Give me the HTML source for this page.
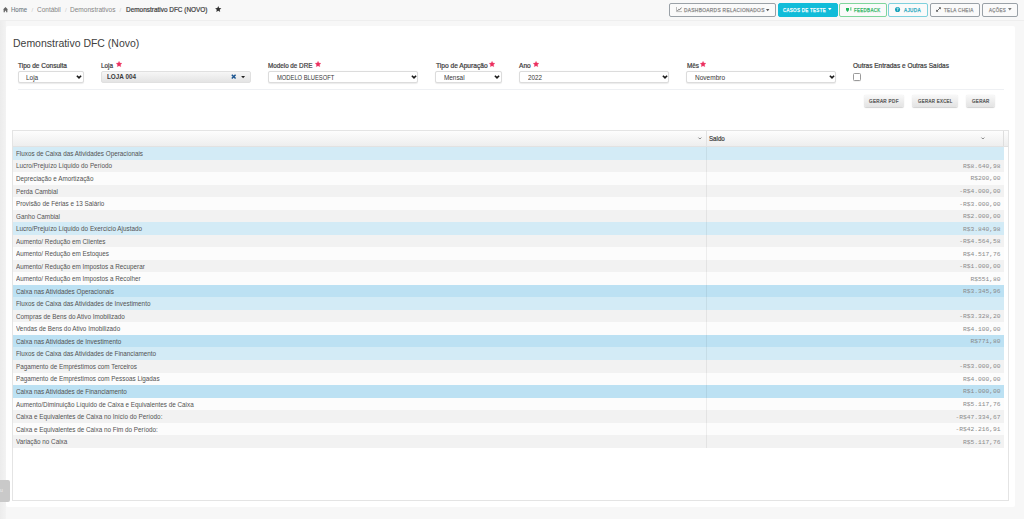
<!DOCTYPE html>
<html><head><meta charset="utf-8">
<style>
*{box-sizing:border-box;margin:0;padding:0}
html,body{width:1024px;height:519px;overflow:hidden;background:#f5f5f5;font-family:"Liberation Sans",sans-serif;color:#333}
.r,.t{position:absolute}
.t{white-space:nowrap}
svg.r{overflow:visible}
</style></head><body>
<div class="r" style="left:0px;top:0px;width:1024px;height:519px;background:#f7f7f7"></div>
<div class="r" style="left:0px;top:21px;width:6px;height:498px;background:linear-gradient(90deg,#ececec,#f3f3f3)"></div>
<div class="r" style="left:0px;top:0px;width:1024px;height:20px;background:#f8f8f8"></div>
<div class="r" style="left:0px;top:20px;width:1024px;height:1px;background:#eeeeee"></div>
<svg class="r" style="left:2.9px;top:6.9px" width="5" height="5.2" viewBox="0 0 12 10" preserveAspectRatio="none"><path d="M6 0 L0 5 L1.5 5 L1.5 10 L4.5 10 L4.5 7 L7.5 7 L7.5 10 L10.5 10 L10.5 5 L12 5 Z" fill="#666"/></svg>
<div class="t" style="left:11px;top:5.85px;font-size:6.8px;line-height:7.596px;font-weight:normal;letter-spacing:0px;color:#6e7882;-webkit-text-stroke:0.1px #6e7882;transform:scaleX(0.8820);transform-origin:0 0;">Home</div>
<div class="t" style="left:31.5px;top:6.57px;font-size:6.0px;line-height:6.702px;font-weight:normal;letter-spacing:0px;color:#c8c8c8;;">/</div>
<div class="t" style="left:37px;top:5.85px;font-size:6.8px;line-height:7.596px;font-weight:normal;letter-spacing:0px;color:#858585;;transform:scaleX(0.9524);transform-origin:0 0;">Contábil</div>
<div class="t" style="left:65px;top:6.57px;font-size:6.0px;line-height:6.702px;font-weight:normal;letter-spacing:0px;color:#c8c8c8;;">/</div>
<div class="t" style="left:70.25px;top:5.85px;font-size:6.8px;line-height:7.596px;font-weight:normal;letter-spacing:0px;color:#858585;;transform:scaleX(0.9636);transform-origin:0 0;">Demonstrativos</div>
<div class="t" style="left:119.5px;top:6.57px;font-size:6.0px;line-height:6.702px;font-weight:normal;letter-spacing:0px;color:#c8c8c8;;">/</div>
<div class="t" style="left:125.8px;top:5.55px;font-size:6.8px;line-height:7.596px;font-weight:normal;letter-spacing:0px;color:#3d3d3d;-webkit-text-stroke:0.2px #3d3d3d;transform:scaleX(0.9465);transform-origin:0 0;">Demonstrativo DFC (NOVO)</div>
<svg class="r" style="left:214.5px;top:5.9px" width="6.5" height="6" viewBox="0 0 24 23"><path d="M12 0 L15.5 7.5 L24 8.5 L17.7 14.2 L19.4 22.6 L12 18.4 L4.6 22.6 L6.3 14.2 L0 8.5 L8.5 7.5 Z" fill="#333"/></svg>
<div class="r" style="left:669.3px;top:3px;width:106.30000000000007px;height:13.5px;border:1px solid #9aa1a7;border-radius:2px;background:#fafafa"></div>
<div class="t" style="left:684.1px;top:7.89px;font-size:5.2px;line-height:5.808px;font-weight:normal;letter-spacing:0.35px;color:#8a8a8a;-webkit-text-stroke:0.25px #8a8a8a;transform:scaleX(0.9271);transform-origin:0 0;">DASHBOARDS RELACIONADOS</div>
<svg class="r" style="left:766.2px;top:8.5px" width="3.4" height="2.2" viewBox="0 0 4 2.6"><path d="M0 0H4L2 2.6Z" fill="#555"/></svg>
<svg class="r" style="left:675.6px;top:7px" width="6.2" height="5" viewBox="0 0 12 10"><path d="M0.8 0V9.2H12" stroke="#999" stroke-width="1.3" fill="none"/><path d="M2.6 8L5.4 4.6L7.2 5.6L10.8 1.2" stroke="#6f6f6f" stroke-width="1.9" fill="none"/></svg>
<div class="r" style="left:777.6px;top:3px;width:60.10000000000002px;height:13.5px;border:1px solid #10bcd9;border-radius:2px;background:#10bcd9"></div>
<div class="t" style="left:783px;top:7.89px;font-size:5.2px;line-height:5.808px;font-weight:normal;letter-spacing:0.35px;color:#ffffff;-webkit-text-stroke:0.25px #ffffff;transform:scaleX(0.8638);transform-origin:0 0;">CASOS DE TESTE</div>
<svg class="r" style="left:828.4px;top:8.3px" width="3.6" height="2.4" viewBox="0 0 4 2.6"><path d="M0 0H4L2 2.6Z" fill="#fff"/></svg>
<div class="r" style="left:839.4px;top:3px;width:47.200000000000045px;height:13.5px;border:1px solid #7fd59d;border-radius:2px;background:#fafafa"></div>
<div class="t" style="left:853.6px;top:7.89px;font-size:5.2px;line-height:5.808px;font-weight:normal;letter-spacing:0.35px;color:#2fb563;-webkit-text-stroke:0.25px #2fb563;transform:scaleX(0.8614);transform-origin:0 0;">FEEDBACK</div>
<svg class="r" style="left:845.9px;top:7px" width="6" height="5" viewBox="0 0 6 5"><path d="M0 0.9H3V2.6Q3 4 1.5 5Q0 4 0 2.6Z" fill="#1fb85a"/><path d="M4.2 0.5L5.4 0.1V3.8L4.2 3.4Z" fill="#5fcf8a"/></svg>
<div class="r" style="left:888.2px;top:3px;width:39.89999999999998px;height:13.5px;border:1px solid #7fd0dc;border-radius:2px;background:#fafafa"></div>
<div class="t" style="left:903.8px;top:7.89px;font-size:5.2px;line-height:5.808px;font-weight:normal;letter-spacing:0.35px;color:#1fa8c0;-webkit-text-stroke:0.25px #1fa8c0;transform:scaleX(0.9006);transform-origin:0 0;">AJUDA</div>
<svg class="r" style="left:895.3px;top:7px" width="5.1" height="5.1" viewBox="0 0 10 10"><circle cx="5" cy="5" r="5" fill="#16a2ba"/><path d="M3.6 3.8Q3.6 2.3 5 2.3Q6.5 2.3 6.5 3.6Q6.5 4.5 5 5.2V6" stroke="#fff" stroke-width="1.3" fill="none"/><rect x="4.4" y="6.8" width="1.3" height="1.2" fill="#fff"/></svg>
<div class="r" style="left:929.7px;top:3px;width:50.69999999999993px;height:13.5px;border:1px solid #9aa1a7;border-radius:2px;background:#fafafa"></div>
<div class="t" style="left:944.3px;top:7.89px;font-size:5.2px;line-height:5.808px;font-weight:normal;letter-spacing:0.35px;color:#8a8a8a;-webkit-text-stroke:0.25px #8a8a8a;transform:scaleX(0.8870);transform-origin:0 0;">TELA CHEIA</div>
<svg class="r" style="left:935.7px;top:7px" width="5" height="5" viewBox="0 0 10 10"><path d="M2 8L8 2" stroke="#555" stroke-width="1.7"/><path d="M5.2 0.3H9.7V4.8Z M0.3 5.2V9.7H4.8Z" fill="#555"/></svg>
<div class="r" style="left:982.3px;top:3px;width:35.700000000000045px;height:13.5px;border:1px solid #9aa1a7;border-radius:2px;background:#fafafa"></div>
<div class="t" style="left:988.5px;top:7.89px;font-size:5.2px;line-height:5.808px;font-weight:normal;letter-spacing:0.35px;color:#8a8a8a;-webkit-text-stroke:0.25px #8a8a8a;transform:scaleX(0.8533);transform-origin:0 0;">AÇÕES</div>
<svg class="r" style="left:1008.2px;top:8.3px" width="3.7" height="2.4" viewBox="0 0 4 2.6"><path d="M0 0H4L2 2.6Z" fill="#777"/></svg>
<div class="r" style="left:6px;top:26px;width:1009px;height:481px;background:#ffffff;border-radius:2px"></div>
<div class="t" style="left:12.5px;top:37.45px;font-size:11px;line-height:12.287px;font-weight:normal;letter-spacing:0px;color:#404040;;transform:scaleX(0.9518);transform-origin:0 0;">Demonstrativo DFC (Novo)</div>
<div class="t" style="left:18px;top:61.77px;font-size:6.5px;line-height:7.261px;font-weight:normal;letter-spacing:0px;color:#3a3a3a;-webkit-text-stroke:0.2px #3a3a3a;transform:scaleX(0.9999);transform-origin:0 0;">Tipo de Consulta</div>
<div class="t" style="left:101.3px;top:61.77px;font-size:6.5px;line-height:7.261px;font-weight:normal;letter-spacing:0px;color:#3a3a3a;-webkit-text-stroke:0.2px #3a3a3a;transform:scaleX(0.9759);transform-origin:0 0;">Loja</div>
<svg class="r" style="left:115.5px;top:60.9px" width="6.1" height="6.1" viewBox="0 0 10 10"><path d="M5.00 0.40L6.47 3.38L9.76 3.85L7.38 6.17L7.94 9.45L5.00 7.90L2.06 9.45L2.62 6.17L0.24 3.85L3.53 3.38Z" fill="#ec2f5f" stroke="#ec2f5f" stroke-width="0.4" stroke-linejoin="round"/></svg>
<div class="t" style="left:268.4px;top:61.77px;font-size:6.5px;line-height:7.261px;font-weight:normal;letter-spacing:0px;color:#3a3a3a;-webkit-text-stroke:0.2px #3a3a3a;transform:scaleX(0.9675);transform-origin:0 0;">Modelo de DRE</div>
<svg class="r" style="left:315.2px;top:60.9px" width="6.1" height="6.1" viewBox="0 0 10 10"><path d="M5.00 0.40L6.47 3.38L9.76 3.85L7.38 6.17L7.94 9.45L5.00 7.90L2.06 9.45L2.62 6.17L0.24 3.85L3.53 3.38Z" fill="#ec2f5f" stroke="#ec2f5f" stroke-width="0.4" stroke-linejoin="round"/></svg>
<div class="t" style="left:435.6px;top:61.77px;font-size:6.5px;line-height:7.261px;font-weight:normal;letter-spacing:0px;color:#3a3a3a;-webkit-text-stroke:0.2px #3a3a3a;transform:scaleX(1.0174);transform-origin:0 0;">Tipo de Apuração</div>
<svg class="r" style="left:489.2px;top:60.9px" width="6.1" height="6.1" viewBox="0 0 10 10"><path d="M5.00 0.40L6.47 3.38L9.76 3.85L7.38 6.17L7.94 9.45L5.00 7.90L2.06 9.45L2.62 6.17L0.24 3.85L3.53 3.38Z" fill="#ec2f5f" stroke="#ec2f5f" stroke-width="0.4" stroke-linejoin="round"/></svg>
<div class="t" style="left:519.3px;top:61.77px;font-size:6.5px;line-height:7.261px;font-weight:normal;letter-spacing:0px;color:#3a3a3a;-webkit-text-stroke:0.2px #3a3a3a;transform:scaleX(1.0105);transform-origin:0 0;">Ano</div>
<svg class="r" style="left:532.6999999999999px;top:60.9px" width="6.1" height="6.1" viewBox="0 0 10 10"><path d="M5.00 0.40L6.47 3.38L9.76 3.85L7.38 6.17L7.94 9.45L5.00 7.90L2.06 9.45L2.62 6.17L0.24 3.85L3.53 3.38Z" fill="#ec2f5f" stroke="#ec2f5f" stroke-width="0.4" stroke-linejoin="round"/></svg>
<div class="t" style="left:686.5px;top:61.77px;font-size:6.5px;line-height:7.261px;font-weight:normal;letter-spacing:0px;color:#3a3a3a;-webkit-text-stroke:0.2px #3a3a3a;transform:scaleX(0.9771);transform-origin:0 0;">Mês</div>
<svg class="r" style="left:699.6999999999999px;top:60.9px" width="6.1" height="6.1" viewBox="0 0 10 10"><path d="M5.00 0.40L6.47 3.38L9.76 3.85L7.38 6.17L7.94 9.45L5.00 7.90L2.06 9.45L2.62 6.17L0.24 3.85L3.53 3.38Z" fill="#ec2f5f" stroke="#ec2f5f" stroke-width="0.4" stroke-linejoin="round"/></svg>
<div class="t" style="left:853.4px;top:61.77px;font-size:6.5px;line-height:7.261px;font-weight:normal;letter-spacing:0px;color:#3a3a3a;-webkit-text-stroke:0.2px #3a3a3a;transform:scaleX(0.9978);transform-origin:0 0;">Outras Entradas e Outras Saídas</div>
<div class="r" style="left:17.5px;top:70.6px;width:66.3px;height:12.2px;border:1px solid #dcdcdc;border-radius:2px;background:#fff;box-shadow:0 0.5px 1px rgba(0,0,0,.08)"></div>
<div class="t" style="left:25.8px;top:73.73px;font-size:6.6px;line-height:7.372px;font-weight:normal;letter-spacing:0px;color:#383838;;transform:scaleX(0.9784);transform-origin:0 0;">Loja</div>
<svg class="r" style="left:76.2px;top:75.1px" width="6" height="4" viewBox="0 0 10 7"><path d="M1.3 1.3L5 5L8.7 1.3" stroke="#1a1a1a" stroke-width="2.8" fill="none"/></svg>
<div class="r" style="left:268.4px;top:70.6px;width:150.0px;height:12.2px;border:1px solid #dcdcdc;border-radius:2px;background:#fff;box-shadow:0 0.5px 1px rgba(0,0,0,.08)"></div>
<div class="t" style="left:276.8px;top:73.73px;font-size:6.6px;line-height:7.372px;font-weight:normal;letter-spacing:0px;color:#383838;;transform:scaleX(0.8786);transform-origin:0 0;">MODELO BLUESOFT</div>
<svg class="r" style="left:410.79999999999995px;top:75.1px" width="6" height="4" viewBox="0 0 10 7"><path d="M1.3 1.3L5 5L8.7 1.3" stroke="#1a1a1a" stroke-width="2.8" fill="none"/></svg>
<div class="r" style="left:435.3px;top:70.6px;width:66.30000000000001px;height:12.2px;border:1px solid #dcdcdc;border-radius:2px;background:#fff;box-shadow:0 0.5px 1px rgba(0,0,0,.08)"></div>
<div class="t" style="left:444px;top:73.73px;font-size:6.6px;line-height:7.372px;font-weight:normal;letter-spacing:0px;color:#383838;;transform:scaleX(0.9687);transform-origin:0 0;">Mensal</div>
<svg class="r" style="left:494.0px;top:75.1px" width="6" height="4" viewBox="0 0 10 7"><path d="M1.3 1.3L5 5L8.7 1.3" stroke="#1a1a1a" stroke-width="2.8" fill="none"/></svg>
<div class="r" style="left:519.3px;top:70.6px;width:150.0px;height:12.2px;border:1px solid #dcdcdc;border-radius:2px;background:#fff;box-shadow:0 0.5px 1px rgba(0,0,0,.08)"></div>
<div class="t" style="left:527.9px;top:73.73px;font-size:6.6px;line-height:7.372px;font-weight:normal;letter-spacing:0px;color:#383838;;transform:scaleX(0.9542);transform-origin:0 0;">2022</div>
<svg class="r" style="left:661.6999999999999px;top:75.1px" width="6" height="4" viewBox="0 0 10 7"><path d="M1.3 1.3L5 5L8.7 1.3" stroke="#1a1a1a" stroke-width="2.8" fill="none"/></svg>
<div class="r" style="left:686.3px;top:70.6px;width:150.0px;height:12.2px;border:1px solid #dcdcdc;border-radius:2px;background:#fff;box-shadow:0 0.5px 1px rgba(0,0,0,.08)"></div>
<div class="t" style="left:695px;top:73.73px;font-size:6.6px;line-height:7.372px;font-weight:normal;letter-spacing:0px;color:#383838;;transform:scaleX(0.9894);transform-origin:0 0;">Novembro</div>
<svg class="r" style="left:828.6999999999999px;top:75.1px" width="6" height="4" viewBox="0 0 10 7"><path d="M1.3 1.3L5 5L8.7 1.3" stroke="#1a1a1a" stroke-width="2.8" fill="none"/></svg>
<div class="r" style="left:101.3px;top:70.7px;width:149.9px;height:12.2px;border:1px solid #e0e0e0;border-radius:2px;background:linear-gradient(#f6f6f6,#e4e4e4)"></div>
<div class="t" style="left:107px;top:73.13px;font-size:6.6px;line-height:7.372px;font-weight:bold;letter-spacing:0px;color:#3a3a3a;;transform:scaleX(0.9607);transform-origin:0 0;">LOJA 004</div>
<svg class="r" style="left:230.8px;top:74px" width="5.4" height="5.4" viewBox="0 0 10 10"><path d="M1.5 1.5L8.5 8.5M8.5 1.5L1.5 8.5" stroke="#1b5590" stroke-width="2.8"/></svg>
<svg class="r" style="left:241px;top:76px" width="4.2" height="2.2" viewBox="0 0 4 2.2"><path d="M0 0H4L2 2.2Z" fill="#222"/></svg>
<div class="r" style="left:853px;top:72.8px;width:8px;height:7.8px;border:1px solid #9a9a9a;border-radius:1.5px;background:#fff;box-shadow:0 0.5px 0.5px rgba(0,0,0,.1)"></div>
<div class="r" style="left:18px;top:89px;width:986px;height:1px;background:#eef0f3"></div>
<div class="r" style="left:863.6px;top:95px;width:40.60000000000002px;height:12.3px;border-radius:2px;background:linear-gradient(#f8f8f8,#e3e3e3);box-shadow:0 0.6px 1px rgba(0,0,0,.18)"></div>
<div class="t" style="left:869px;top:99.24px;font-size:4.6px;line-height:5.138px;font-weight:normal;letter-spacing:0.35px;color:#4f4f4f;-webkit-text-stroke:0.2px #4f4f4f;transform:scaleX(0.9949);transform-origin:0 0;">GERAR PDF</div>
<div class="r" style="left:912px;top:95px;width:46.299999999999955px;height:12.3px;border-radius:2px;background:linear-gradient(#f8f8f8,#e3e3e3);box-shadow:0 0.6px 1px rgba(0,0,0,.18)"></div>
<div class="t" style="left:917.6px;top:99.24px;font-size:4.6px;line-height:5.138px;font-weight:normal;letter-spacing:0.35px;color:#4f4f4f;-webkit-text-stroke:0.2px #4f4f4f;transform:scaleX(0.9471);transform-origin:0 0;">GERAR EXCEL</div>
<div class="r" style="left:966px;top:95px;width:29px;height:12.3px;border-radius:2px;background:linear-gradient(#f8f8f8,#e3e3e3);box-shadow:0 0.6px 1px rgba(0,0,0,.18)"></div>
<div class="t" style="left:971.5px;top:99.24px;font-size:4.6px;line-height:5.138px;font-weight:normal;letter-spacing:0.35px;color:#4f4f4f;-webkit-text-stroke:0.2px #4f4f4f;transform:scaleX(0.9727);transform-origin:0 0;">GERAR</div>
<div class="r" style="left:12px;top:130px;width:997px;height:371px;border:1px solid #e4e4e4;background:#fff"></div>
<div class="r" style="left:13px;top:131px;width:995px;height:15px;background:linear-gradient(#fdfdfd,#eeeeee)"></div>
<div class="r" style="left:13px;top:146px;width:995px;height:1px;background:#e2e2e2"></div>
<div class="r" style="left:1003px;top:131px;width:1px;height:15px;background:#dedede"></div>
<div class="r" style="left:706px;top:131px;width:1px;height:15px;background:#e2e2e2"></div>
<svg class="r" style="left:697.6px;top:136.6px" width="3.8" height="2.6" viewBox="0 0 8 5"><path d="M1 1L4 4L7 1" stroke="#777" stroke-width="1.9" fill="none"/></svg>
<svg class="r" style="left:980.6px;top:136.6px" width="3.8" height="2.6" viewBox="0 0 8 5"><path d="M1 1L4 4L7 1" stroke="#777" stroke-width="1.9" fill="none"/></svg>
<div class="t" style="left:709.3px;top:134.64px;font-size:6.7px;line-height:7.484px;font-weight:normal;letter-spacing:0px;color:#404040;-webkit-text-stroke:0.2px #404040;transform:scaleX(0.9235);transform-origin:0 0;">Saldo</div>
<div class="r" style="left:13px;top:147.0px;width:990.7px;height:12.53px;background:#d3ebf6"></div>
<div class="r" style="left:13px;top:159.53px;width:990.7px;height:12.53px;background:#f2f2f2"></div>
<div class="r" style="left:13px;top:172.06px;width:990.7px;height:12.53px;background:#fcfcfc"></div>
<div class="r" style="left:13px;top:184.59px;width:990.7px;height:12.53px;background:#f2f2f2"></div>
<div class="r" style="left:13px;top:197.12px;width:990.7px;height:12.53px;background:#fcfcfc"></div>
<div class="r" style="left:13px;top:209.65px;width:990.7px;height:12.53px;background:#f2f2f2"></div>
<div class="r" style="left:13px;top:222.18px;width:990.7px;height:12.53px;background:#d3ebf6"></div>
<div class="r" style="left:13px;top:234.71px;width:990.7px;height:12.53px;background:#f2f2f2"></div>
<div class="r" style="left:13px;top:247.24px;width:990.7px;height:12.53px;background:#fcfcfc"></div>
<div class="r" style="left:13px;top:259.77px;width:990.7px;height:12.53px;background:#f2f2f2"></div>
<div class="r" style="left:13px;top:272.3px;width:990.7px;height:12.53px;background:#fcfcfc"></div>
<div class="r" style="left:13px;top:284.83px;width:990.7px;height:12.53px;background:#bce1f3"></div>
<div class="r" style="left:13px;top:297.36px;width:990.7px;height:12.53px;background:#d3ebf6"></div>
<div class="r" style="left:13px;top:309.89px;width:990.7px;height:12.53px;background:#f2f2f2"></div>
<div class="r" style="left:13px;top:322.42px;width:990.7px;height:12.53px;background:#fcfcfc"></div>
<div class="r" style="left:13px;top:334.95px;width:990.7px;height:12.53px;background:#bce1f3"></div>
<div class="r" style="left:13px;top:347.48px;width:990.7px;height:12.53px;background:#d3ebf6"></div>
<div class="r" style="left:13px;top:360.01px;width:990.7px;height:12.53px;background:#f2f2f2"></div>
<div class="r" style="left:13px;top:372.54px;width:990.7px;height:12.53px;background:#fcfcfc"></div>
<div class="r" style="left:13px;top:385.07px;width:990.7px;height:12.53px;background:#bce1f3"></div>
<div class="r" style="left:13px;top:397.6px;width:990.7px;height:12.53px;background:#fcfcfc"></div>
<div class="r" style="left:13px;top:410.13px;width:990.7px;height:12.53px;background:#f2f2f2"></div>
<div class="r" style="left:13px;top:422.66px;width:990.7px;height:12.53px;background:#fcfcfc"></div>
<div class="r" style="left:13px;top:435.19px;width:990.7px;height:12.53px;background:#f2f2f2"></div>
<div class="t" style="left:15.7px;top:149.93px;font-size:6.6px;line-height:7.372px;font-weight:normal;letter-spacing:0px;color:#525252;transform:scaleX(0.96);transform-origin:0 0;">Fluxos de Caixa das Atividades Operacionais</div>
<div class="t" style="left:15.7px;top:162.46px;font-size:6.6px;line-height:7.372px;font-weight:normal;letter-spacing:0px;color:#525252;transform:scaleX(0.96);transform-origin:0 0;">Lucro/Prejuízo Líquido do Período</div>
<div class="t" style="right:23.399999999999977px;top:162.92px;font-size:6.25px;line-height:7.081px;font-family:'Liberation Mono',monospace;color:#8a8a8a">R$8.640,98</div>
<div class="t" style="left:15.7px;top:174.99px;font-size:6.6px;line-height:7.372px;font-weight:normal;letter-spacing:0px;color:#525252;transform:scaleX(0.96);transform-origin:0 0;">Depreciação e Amortização</div>
<div class="t" style="right:23.399999999999977px;top:175.45px;font-size:6.25px;line-height:7.081px;font-family:'Liberation Mono',monospace;color:#8a8a8a">R$200,00</div>
<div class="t" style="left:15.7px;top:187.52px;font-size:6.6px;line-height:7.372px;font-weight:normal;letter-spacing:0px;color:#525252;transform:scaleX(0.96);transform-origin:0 0;">Perda Cambial</div>
<div class="t" style="right:23.399999999999977px;top:187.98px;font-size:6.25px;line-height:7.081px;font-family:'Liberation Mono',monospace;color:#8a8a8a">-R$4.000,00</div>
<div class="t" style="left:15.7px;top:200.05px;font-size:6.6px;line-height:7.372px;font-weight:normal;letter-spacing:0px;color:#525252;transform:scaleX(0.96);transform-origin:0 0;">Provisão de Férias e 13 Salário</div>
<div class="t" style="right:23.399999999999977px;top:200.51px;font-size:6.25px;line-height:7.081px;font-family:'Liberation Mono',monospace;color:#8a8a8a">-R$3.000,00</div>
<div class="t" style="left:15.7px;top:212.58px;font-size:6.6px;line-height:7.372px;font-weight:normal;letter-spacing:0px;color:#525252;transform:scaleX(0.96);transform-origin:0 0;">Ganho Cambial</div>
<div class="t" style="right:23.399999999999977px;top:213.04px;font-size:6.25px;line-height:7.081px;font-family:'Liberation Mono',monospace;color:#8a8a8a">R$2.000,00</div>
<div class="t" style="left:15.7px;top:225.11px;font-size:6.6px;line-height:7.372px;font-weight:normal;letter-spacing:0px;color:#525252;transform:scaleX(0.96);transform-origin:0 0;">Lucro/Prejuízo Líquido do Exercício Ajustado</div>
<div class="t" style="right:23.399999999999977px;top:225.57px;font-size:6.25px;line-height:7.081px;font-family:'Liberation Mono',monospace;color:#8a8a8a">R$3.840,98</div>
<div class="t" style="left:15.7px;top:237.64px;font-size:6.6px;line-height:7.372px;font-weight:normal;letter-spacing:0px;color:#525252;transform:scaleX(0.96);transform-origin:0 0;">Aumento/ Redução em Clientes</div>
<div class="t" style="right:23.399999999999977px;top:238.10px;font-size:6.25px;line-height:7.081px;font-family:'Liberation Mono',monospace;color:#8a8a8a">-R$4.564,58</div>
<div class="t" style="left:15.7px;top:250.17px;font-size:6.6px;line-height:7.372px;font-weight:normal;letter-spacing:0px;color:#525252;transform:scaleX(0.96);transform-origin:0 0;">Aumento/ Redução em Estoques</div>
<div class="t" style="right:23.399999999999977px;top:250.63px;font-size:6.25px;line-height:7.081px;font-family:'Liberation Mono',monospace;color:#8a8a8a">R$4.517,76</div>
<div class="t" style="left:15.7px;top:262.70px;font-size:6.6px;line-height:7.372px;font-weight:normal;letter-spacing:0px;color:#525252;transform:scaleX(0.96);transform-origin:0 0;">Aumento/ Redução em Impostos a Recuperar</div>
<div class="t" style="right:23.399999999999977px;top:263.16px;font-size:6.25px;line-height:7.081px;font-family:'Liberation Mono',monospace;color:#8a8a8a">-R$1.000,00</div>
<div class="t" style="left:15.7px;top:275.23px;font-size:6.6px;line-height:7.372px;font-weight:normal;letter-spacing:0px;color:#525252;transform:scaleX(0.96);transform-origin:0 0;">Aumento/ Redução em Impostos a Recolher</div>
<div class="t" style="right:23.399999999999977px;top:275.69px;font-size:6.25px;line-height:7.081px;font-family:'Liberation Mono',monospace;color:#8a8a8a">R$551,80</div>
<div class="t" style="left:15.7px;top:287.76px;font-size:6.6px;line-height:7.372px;font-weight:normal;letter-spacing:0px;color:#525252;transform:scaleX(0.96);transform-origin:0 0;">Caixa nas Atividades Operacionais</div>
<div class="t" style="right:23.399999999999977px;top:288.22px;font-size:6.25px;line-height:7.081px;font-family:'Liberation Mono',monospace;color:#8a8a8a">R$3.345,96</div>
<div class="t" style="left:15.7px;top:300.29px;font-size:6.6px;line-height:7.372px;font-weight:normal;letter-spacing:0px;color:#525252;transform:scaleX(0.96);transform-origin:0 0;">Fluxos de Caixa das Atividades de Investimento</div>
<div class="t" style="left:15.7px;top:312.82px;font-size:6.6px;line-height:7.372px;font-weight:normal;letter-spacing:0px;color:#525252;transform:scaleX(0.96);transform-origin:0 0;">Compras de Bens do Ativo Imobilizado</div>
<div class="t" style="right:23.399999999999977px;top:313.28px;font-size:6.25px;line-height:7.081px;font-family:'Liberation Mono',monospace;color:#8a8a8a">-R$3.328,20</div>
<div class="t" style="left:15.7px;top:325.35px;font-size:6.6px;line-height:7.372px;font-weight:normal;letter-spacing:0px;color:#525252;transform:scaleX(0.96);transform-origin:0 0;">Vendas de Bens do Ativo Imobilizado</div>
<div class="t" style="right:23.399999999999977px;top:325.81px;font-size:6.25px;line-height:7.081px;font-family:'Liberation Mono',monospace;color:#8a8a8a">R$4.100,00</div>
<div class="t" style="left:15.7px;top:337.88px;font-size:6.6px;line-height:7.372px;font-weight:normal;letter-spacing:0px;color:#525252;transform:scaleX(0.96);transform-origin:0 0;">Caixa nas Atividades de Investimento</div>
<div class="t" style="right:23.399999999999977px;top:338.34px;font-size:6.25px;line-height:7.081px;font-family:'Liberation Mono',monospace;color:#8a8a8a">R$771,80</div>
<div class="t" style="left:15.7px;top:350.41px;font-size:6.6px;line-height:7.372px;font-weight:normal;letter-spacing:0px;color:#525252;transform:scaleX(0.96);transform-origin:0 0;">Fluxos de Caixa das Atividades de Financiamento</div>
<div class="t" style="left:15.7px;top:362.94px;font-size:6.6px;line-height:7.372px;font-weight:normal;letter-spacing:0px;color:#525252;transform:scaleX(0.96);transform-origin:0 0;">Pagamento de Empréstimos com Terceiros</div>
<div class="t" style="right:23.399999999999977px;top:363.40px;font-size:6.25px;line-height:7.081px;font-family:'Liberation Mono',monospace;color:#8a8a8a">-R$3.000,00</div>
<div class="t" style="left:15.7px;top:375.47px;font-size:6.6px;line-height:7.372px;font-weight:normal;letter-spacing:0px;color:#525252;transform:scaleX(0.96);transform-origin:0 0;">Pagamento de Empréstimos com Pessoas Ligadas</div>
<div class="t" style="right:23.399999999999977px;top:375.93px;font-size:6.25px;line-height:7.081px;font-family:'Liberation Mono',monospace;color:#8a8a8a">R$4.000,00</div>
<div class="t" style="left:15.7px;top:388.00px;font-size:6.6px;line-height:7.372px;font-weight:normal;letter-spacing:0px;color:#525252;transform:scaleX(0.96);transform-origin:0 0;">Caixa nas Atividades de Financiamento</div>
<div class="t" style="right:23.399999999999977px;top:388.46px;font-size:6.25px;line-height:7.081px;font-family:'Liberation Mono',monospace;color:#8a8a8a">R$1.000,00</div>
<div class="t" style="left:15.7px;top:400.53px;font-size:6.6px;line-height:7.372px;font-weight:normal;letter-spacing:0px;color:#525252;transform:scaleX(0.96);transform-origin:0 0;">Aumento/Diminuição Líquido de Caixa e Equivalentes de Caixa</div>
<div class="t" style="right:23.399999999999977px;top:400.99px;font-size:6.25px;line-height:7.081px;font-family:'Liberation Mono',monospace;color:#8a8a8a">R$5.117,76</div>
<div class="t" style="left:15.7px;top:413.06px;font-size:6.6px;line-height:7.372px;font-weight:normal;letter-spacing:0px;color:#525252;transform:scaleX(0.96);transform-origin:0 0;">Caixa e Equivalentes de Caixa no Início do Período:</div>
<div class="t" style="right:23.399999999999977px;top:413.52px;font-size:6.25px;line-height:7.081px;font-family:'Liberation Mono',monospace;color:#8a8a8a">-R$47.334,67</div>
<div class="t" style="left:15.7px;top:425.59px;font-size:6.6px;line-height:7.372px;font-weight:normal;letter-spacing:0px;color:#525252;transform:scaleX(0.96);transform-origin:0 0;">Caixa e Equivalentes de Caixa no Fim do Período:</div>
<div class="t" style="right:23.399999999999977px;top:426.05px;font-size:6.25px;line-height:7.081px;font-family:'Liberation Mono',monospace;color:#8a8a8a">-R$42.216,91</div>
<div class="t" style="left:15.7px;top:438.12px;font-size:6.6px;line-height:7.372px;font-weight:normal;letter-spacing:0px;color:#525252;transform:scaleX(0.96);transform-origin:0 0;">Variação no Caixa</div>
<div class="t" style="right:23.399999999999977px;top:438.58px;font-size:6.25px;line-height:7.081px;font-family:'Liberation Mono',monospace;color:#8a8a8a">R$5.117,76</div>
<div class="r" style="left:706px;top:147px;width:1px;height:300.71999999999997px;background:rgba(0,0,0,.06)"></div>
<div class="r" style="left:0px;top:480px;width:9.8px;height:22px;background:#c9c9c9;border-radius:0 2px 2px 0"></div>
<div class="t" style="left:0px;top:488.48px;font-size:5px;line-height:5.585px;font-weight:normal;letter-spacing:0px;color:#eee;;">u</div>
</body></html>
